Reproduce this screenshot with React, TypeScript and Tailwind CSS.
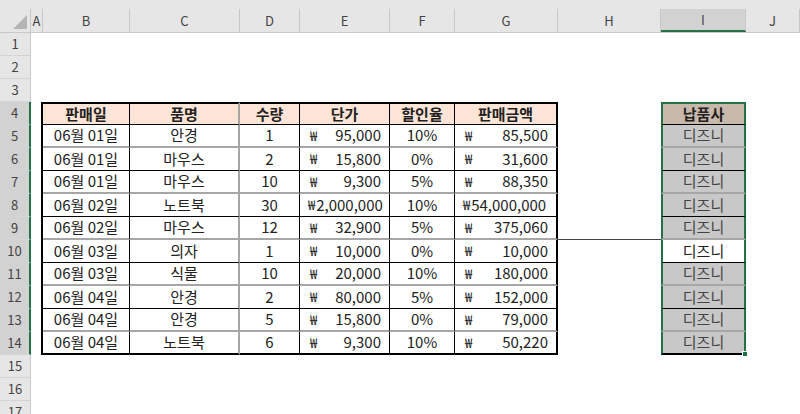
const cols = [
  { n: "A", w: 12 }, { n: "B", w: 87 }, { n: "C", w: 110 }, { n: "D", w: 60 }, { n: "E", w: 90 },
  { n: "F", w: 65 }, { n: "G", w: 103 }, { n: "H", w: 103 }, { n: "I", w: 85 }, { n: "J", w: 54 },
];
const data = [
  ["06월 01일", "안경", "1", "95,000", "10%", "85,500"],
  ["06월 01일", "마우스", "2", "15,800", "0%", "31,600"],
  ["06월 01일", "마우스", "10", "9,300", "5%", "88,350"],
  ["06월 02일", "노트북", "30", "2,000,000", "10%", "54,000,000"],
  ["06월 02일", "마우스", "12", "32,900", "5%", "375,060"],
  ["06월 03일", "의자", "1", "10,000", "0%", "10,000"],
  ["06월 03일", "식물", "10", "20,000", "10%", "180,000"],
  ["06월 04일", "안경", "2", "80,000", "5%", "152,000"],
  ["06월 04일", "안경", "5", "15,800", "0%", "79,000"],
  ["06월 04일", "노트북", "6", "9,300", "10%", "50,220"],
];
const heads = ["판매일", "품명", "수량", "단가", "할인율", "판매금액"];
const font = { fontFamily: "'Noto Sans CJK KR', 'Noto Sans', sans-serif" };

function Money({ v }: { v: string }) {
  const tight = v.length >= 9;
  return (
    <div className={`flex h-full items-center ${tight ? "pl-[8px] pr-[6px]" : "pl-[10px] pr-[8px]"}`}>
      <span className="text-[13px]">₩</span>
      <span className={`${tight ? "ml-[1px]" : "flex-1"} text-right`}>{v}</span>
    </div>
  );
}

export default function App() {
  const rows = Array.from({ length: 17 }, (_, i) => i + 1);
  return (
    <div className="w-[800px] h-[414px] overflow-hidden bg-white text-[15px] text-[#222]" style={font}>
      <div className="flex h-[33px] bg-[#e6e6e6] pt-[9px] border-b border-[#c8c8c8]">
        <div className="w-[31px] shrink-0 border-r border-[#c8c8c8] flex items-end justify-end">
          <div className="w-0 h-0 border-l-[14px] border-l-transparent border-b-[14px] border-b-[#b4b4b4] mr-[3px] mb-[3px]" />
        </div>
        {cols.map((c) => (
          <div
            key={c.n}
            style={{ width: c.w }}
            className={`shrink-0 flex items-center justify-center border-r border-[#c8c8c8] text-[13px] text-[#444] ${c.n === "I" ? "bg-[#d2d2d2] border-b-2 border-b-[#217346]" : ""}`}
          >
            {c.n}
          </div>
        ))}
      </div>
      {rows.map((r) => {
        const inData = r >= 4 && r <= 14;
        const d = r >= 5 && r <= 14 ? data[r - 5] : null;
        const blackBottom = r === 4 || r === 14 || r % 2 === 0;
        const bb = blackBottom ? "border-b border-b-black" : "border-b-2 border-b-[#a6a6a6]";
        return (
          <div key={r} className="flex h-[23px]">
            <div
              className={`w-[31px] shrink-0 flex items-center justify-center text-[13px] text-[#444] border-b border-[#d4d4d4] ${inData ? "bg-[#d2d2d2] border-r-2 border-r-[#217346]" : "bg-[#e6e6e6] border-r border-r-[#c8c8c8]"}`}
            >
              {r}
            </div>
            <div className="w-[12px] shrink-0 border-r-2 border-black" style={{ borderRightColor: inData ? "#000" : "transparent" }} />
            {inData ? (
              <>
                {[87, 110, 60, 90, 65, 103].map((w, ci) => {
                  const isHead = r === 4;
                  const rb = ci === 5 ? "border-r-2 border-r-black" : ci === 1 ? "border-r-2 border-r-[#a6a6a6]" : "border-r border-r-black";
                  const top = r === 4 ? "border-t-2 border-t-black" : "";
                  const bottom = r === 14 ? "border-b-2 border-b-black" : bb;
                  return (
                    <div
                      key={ci}
                      style={{ width: w }}
                      className={`shrink-0 whitespace-nowrap ${rb} ${top} ${bottom} ${isHead ? "bg-[#fce4d6] font-bold" : ""} ${ci === 3 || ci === 5 ? "" : "flex items-center justify-center"}`}
                    >
                      {isHead ? (
                        <div className="flex h-full items-center justify-center">{heads[ci]}</div>
                      ) : ci === 3 ? (
                        <Money v={d![3]} />
                      ) : ci === 5 ? (
                        <Money v={d![5]} />
                      ) : (
                        d![ci]
                      )}
                    </div>
                  );
                })}
                <div className={`w-[103px] shrink-0 ${r === 9 ? "border-b border-b-[#444]" : ""}`} />
                <div
                  className={`w-[85px] shrink-0 flex items-center justify-center border-l-2 border-r-2 border-[#217346] ${r === 4 ? "bg-[#c9b9ab] font-bold border-t-2 border-t-[#217346] border-b border-b-black" : r === 10 ? "bg-white border-b border-b-black" : `bg-[#c8c8c8] ${bb} text-[#444]`} ${r === 14 ? "border-b-2 border-b-[#217346] relative" : ""}`}
                >
                  {r === 4 ? "납품사" : "디즈니"}
                  {r === 14 && <div className="absolute -right-[4px] -bottom-[4px] w-[6px] h-[6px] bg-[#217346] border border-white" />}
                </div>
              </>
            ) : null}
          </div>
        );
      })}
    </div>
  );
}
